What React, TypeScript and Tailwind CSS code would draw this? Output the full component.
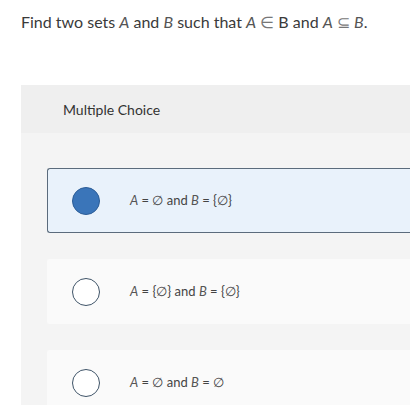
import React from 'react';

const options = [
  { a: '∅', b: '{∅}', selected: true },
  { a: '{∅}', b: '{∅}', selected: false },
  { a: '∅', b: '∅', selected: false },
];

const V: React.FC<{ children: React.ReactNode }> = ({ children }) => (
  <span className="italic text-[#555]">{children}</span>
);

const App: React.FC = () => {
  return (
    <div className="w-[410px] h-[405px] overflow-hidden bg-white text-[#333] font-['Lato','Open_Sans',sans-serif]">
      {/* Question */}
      <p className="pl-[21px] pt-[11px] text-[16px] leading-[21px] text-[#3a3a3a]">
        Find two sets <V>A</V> and <V>B</V> such that <V>A</V> <span className="text-[#777]">∈</span> B and{' '}
        <V>A</V> <span className="text-[#777]">⊆</span> <V>B</V>.
      </p>

      {/* Answer panel */}
      <div className="ml-[21px] mt-[53px]">
        <div className="h-[48px] pl-[42px] flex items-center bg-[#efefef] text-[14px] text-[#333]">
          Multiple Choice
        </div>
        <div className="bg-[#f4f4f4] pt-[35px] pl-[26px] pb-[40px] flex flex-col gap-[26px]">
          {options.map((o, i) => (
            <div
              key={i}
              className={`h-[65px] flex items-center pl-[24px] rounded-l-[3px] ${
                o.selected
                  ? 'border border-r-0 border-[#5b6b7c] bg-[#e9f2fb]'
                  : 'border border-r-0 border-[#fafafa] bg-[#fafafa]'
              }`}
            >
              {o.selected ? (
                <span className="w-[28px] h-[28px] rounded-full bg-[#3a75b9] border border-[#2c5d97] shrink-0" />
              ) : (
                <span className="w-[28px] h-[28px] rounded-full border-[1.5px] border-[#3f5468] bg-white shrink-0" />
              )}
              <span className="ml-[30px] text-[13px] text-[#444]">
                <V>A</V> = {o.a} and <V>B</V> = {o.b}
              </span>
            </div>
          ))}
        </div>
      </div>
    </div>
  );
};

export default App;
